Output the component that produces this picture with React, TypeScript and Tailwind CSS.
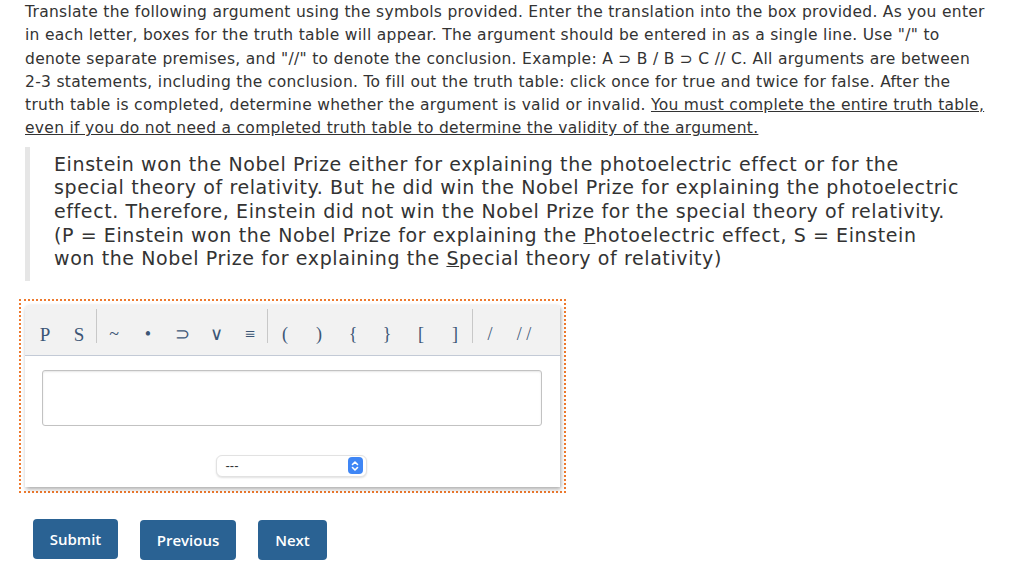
import React, { useState } from "react";

const symbolGroups: string[][] = [
  ["P", "S"],
  ["~", "•", "⊃", "∨", "≡"],
  ["(", ")", "{", "}", "[", "]"],
  ["/", "/ /"],
];

const instructions = [
  'Translate the following argument using the symbols provided. Enter the translation into the box provided. As you enter',
  'in each letter, boxes for the truth table will appear. The argument should be entered in as a single line. Use "/" to',
  'denote separate premises, and "//" to denote the conclusion. Example: A ⊃ B / B ⊃ C // C. All arguments are between',
  "2-3 statements, including the conclusion. To fill out the truth table: click once for true and twice for false. After the",
];

const App = () => {
  const [value, setValue] = useState("");

  const insert = (sym: string) => setValue((v) => v + sym.replace(" ", ""));

  return (
    <div className="min-h-[576px] w-[1024px] bg-white font-['DejaVu_Sans',Verdana,sans-serif] text-[#333]">
      {/* Instructions */}
      <div className="pl-[25px] pt-[1px] text-[15.5px] leading-[23.3px] tracking-[0.3px]">
        {instructions.map((line) => (
          <div key={line} className="whitespace-nowrap">
            {line}
          </div>
        ))}
        <div className="whitespace-nowrap">
          truth table is completed, determine whether the argument is valid or invalid.{" "}
          <span className="underline">You must complete the entire truth table,</span>
        </div>
        <div className="whitespace-nowrap underline">
          even if you do not need a completed truth table to determine the validity of the argument.
        </div>
      </div>

      {/* Argument */}
      <div className="ml-[25px] mt-[6px] border-l-[5px] border-[#e6e6e6] pb-[10px] pl-[24px] pt-[6px] text-[19px] leading-[23.6px] tracking-[0.6px]">
        <div className="whitespace-nowrap">
          Einstein won the Nobel Prize either for explaining the photoelectric effect or for the
        </div>
        <div className="whitespace-nowrap">
          special theory of relativity. But he did win the Nobel Prize for explaining the photoelectric
        </div>
        <div className="whitespace-nowrap">
          effect. Therefore, Einstein did not win the Nobel Prize for the special theory of relativity.
        </div>
        <div className="whitespace-nowrap">
          (P = Einstein won the Nobel Prize for explaining the <span className="underline">P</span>hotoelectric effect, S = Einstein
        </div>
        <div className="whitespace-nowrap">
          won the Nobel Prize for explaining the <span className="underline">S</span>pecial theory of relativity)
        </div>
      </div>

      {/* Editor */}
      <div className="ml-[19px] mt-[18px] w-[547px] border-[2px] border-dotted border-[#ee7a2e] p-[4px]">
        <div className="rounded-t-[4px] bg-white shadow-[1px_2px_4px_rgba(0,0,0,0.35)]">
          <div className="flex h-[51px] items-end rounded-t-[4px] border-b border-[#c3cad6] bg-[#f2f2f2] pb-[6px] pl-[3px] font-['Liberation_Serif','Times_New_Roman',serif] text-[#3c5676]">
            {symbolGroups.map((group, gi) => (
              <React.Fragment key={gi}>
                {gi > 0 && <div className="mb-[6px] h-[34px] w-px self-end bg-[#c8c8c8]" />}
                {group.map((sym) => (
                  <button
                    key={sym}
                    onClick={() => insert(sym)}
                    className={`flex h-[28px] w-[34px] items-center justify-center whitespace-pre ${
                      gi === 0 ? "text-[19px]" : "text-[18px]"
                    }`}
                  >
                    {sym}
                  </button>
                ))}
              </React.Fragment>
            ))}
          </div>

          <div className="px-[17px] pb-[10px] pt-[14px]">
            <textarea
              value={value}
              onChange={(e) => setValue(e.target.value)}
              className="block h-[56px] w-[500px] resize-none rounded-[3px] border border-[#c2c2c2] shadow-[inset_0_1px_2px_rgba(0,0,0,0.1)] outline-none"
            />
            <div className="mt-[29px] flex justify-center pr-[3px]">
              <div className="flex h-[22px] w-[151px] items-center justify-between rounded-[6px] border border-[#e2e2e2] bg-white pl-[9px] pr-[3px] shadow-[0_1px_2px_rgba(0,0,0,0.12)]">
                <span className="font-['Liberation_Sans',Arial,sans-serif] text-[13px] tracking-normal text-[#333]">---</span>
                <span className="flex h-[17px] w-[15px] items-center justify-center rounded-[4px] bg-[#3f86f5]">
                  <svg width="8" height="12" viewBox="0 0 8 12" fill="none" stroke="white" strokeWidth="1.6" strokeLinecap="round" strokeLinejoin="round">
                    <path d="M1.5 4.5 4 2l2.5 2.5" />
                    <path d="M1.5 7.5 4 10l2.5-2.5" />
                  </svg>
                </span>
              </div>
            </div>
          </div>
        </div>
      </div>

      {/* Actions */}
      <div className="ml-[33px] mt-[26px] flex items-start gap-[22px] font-['Open_Sans',sans-serif] text-[15px] font-semibold text-white">
        <button className="h-[40px] w-[85px] rounded-[4px] bg-[#2a6293]">Submit</button>
        <button className="mt-[1px] h-[40px] w-[96px] rounded-[4px] bg-[#2a6293]">Previous</button>
        <button className="mt-[1px] h-[40px] w-[69px] rounded-[4px] bg-[#2a6293]">Next</button>
      </div>
    </div>
  );
};

export default App;
